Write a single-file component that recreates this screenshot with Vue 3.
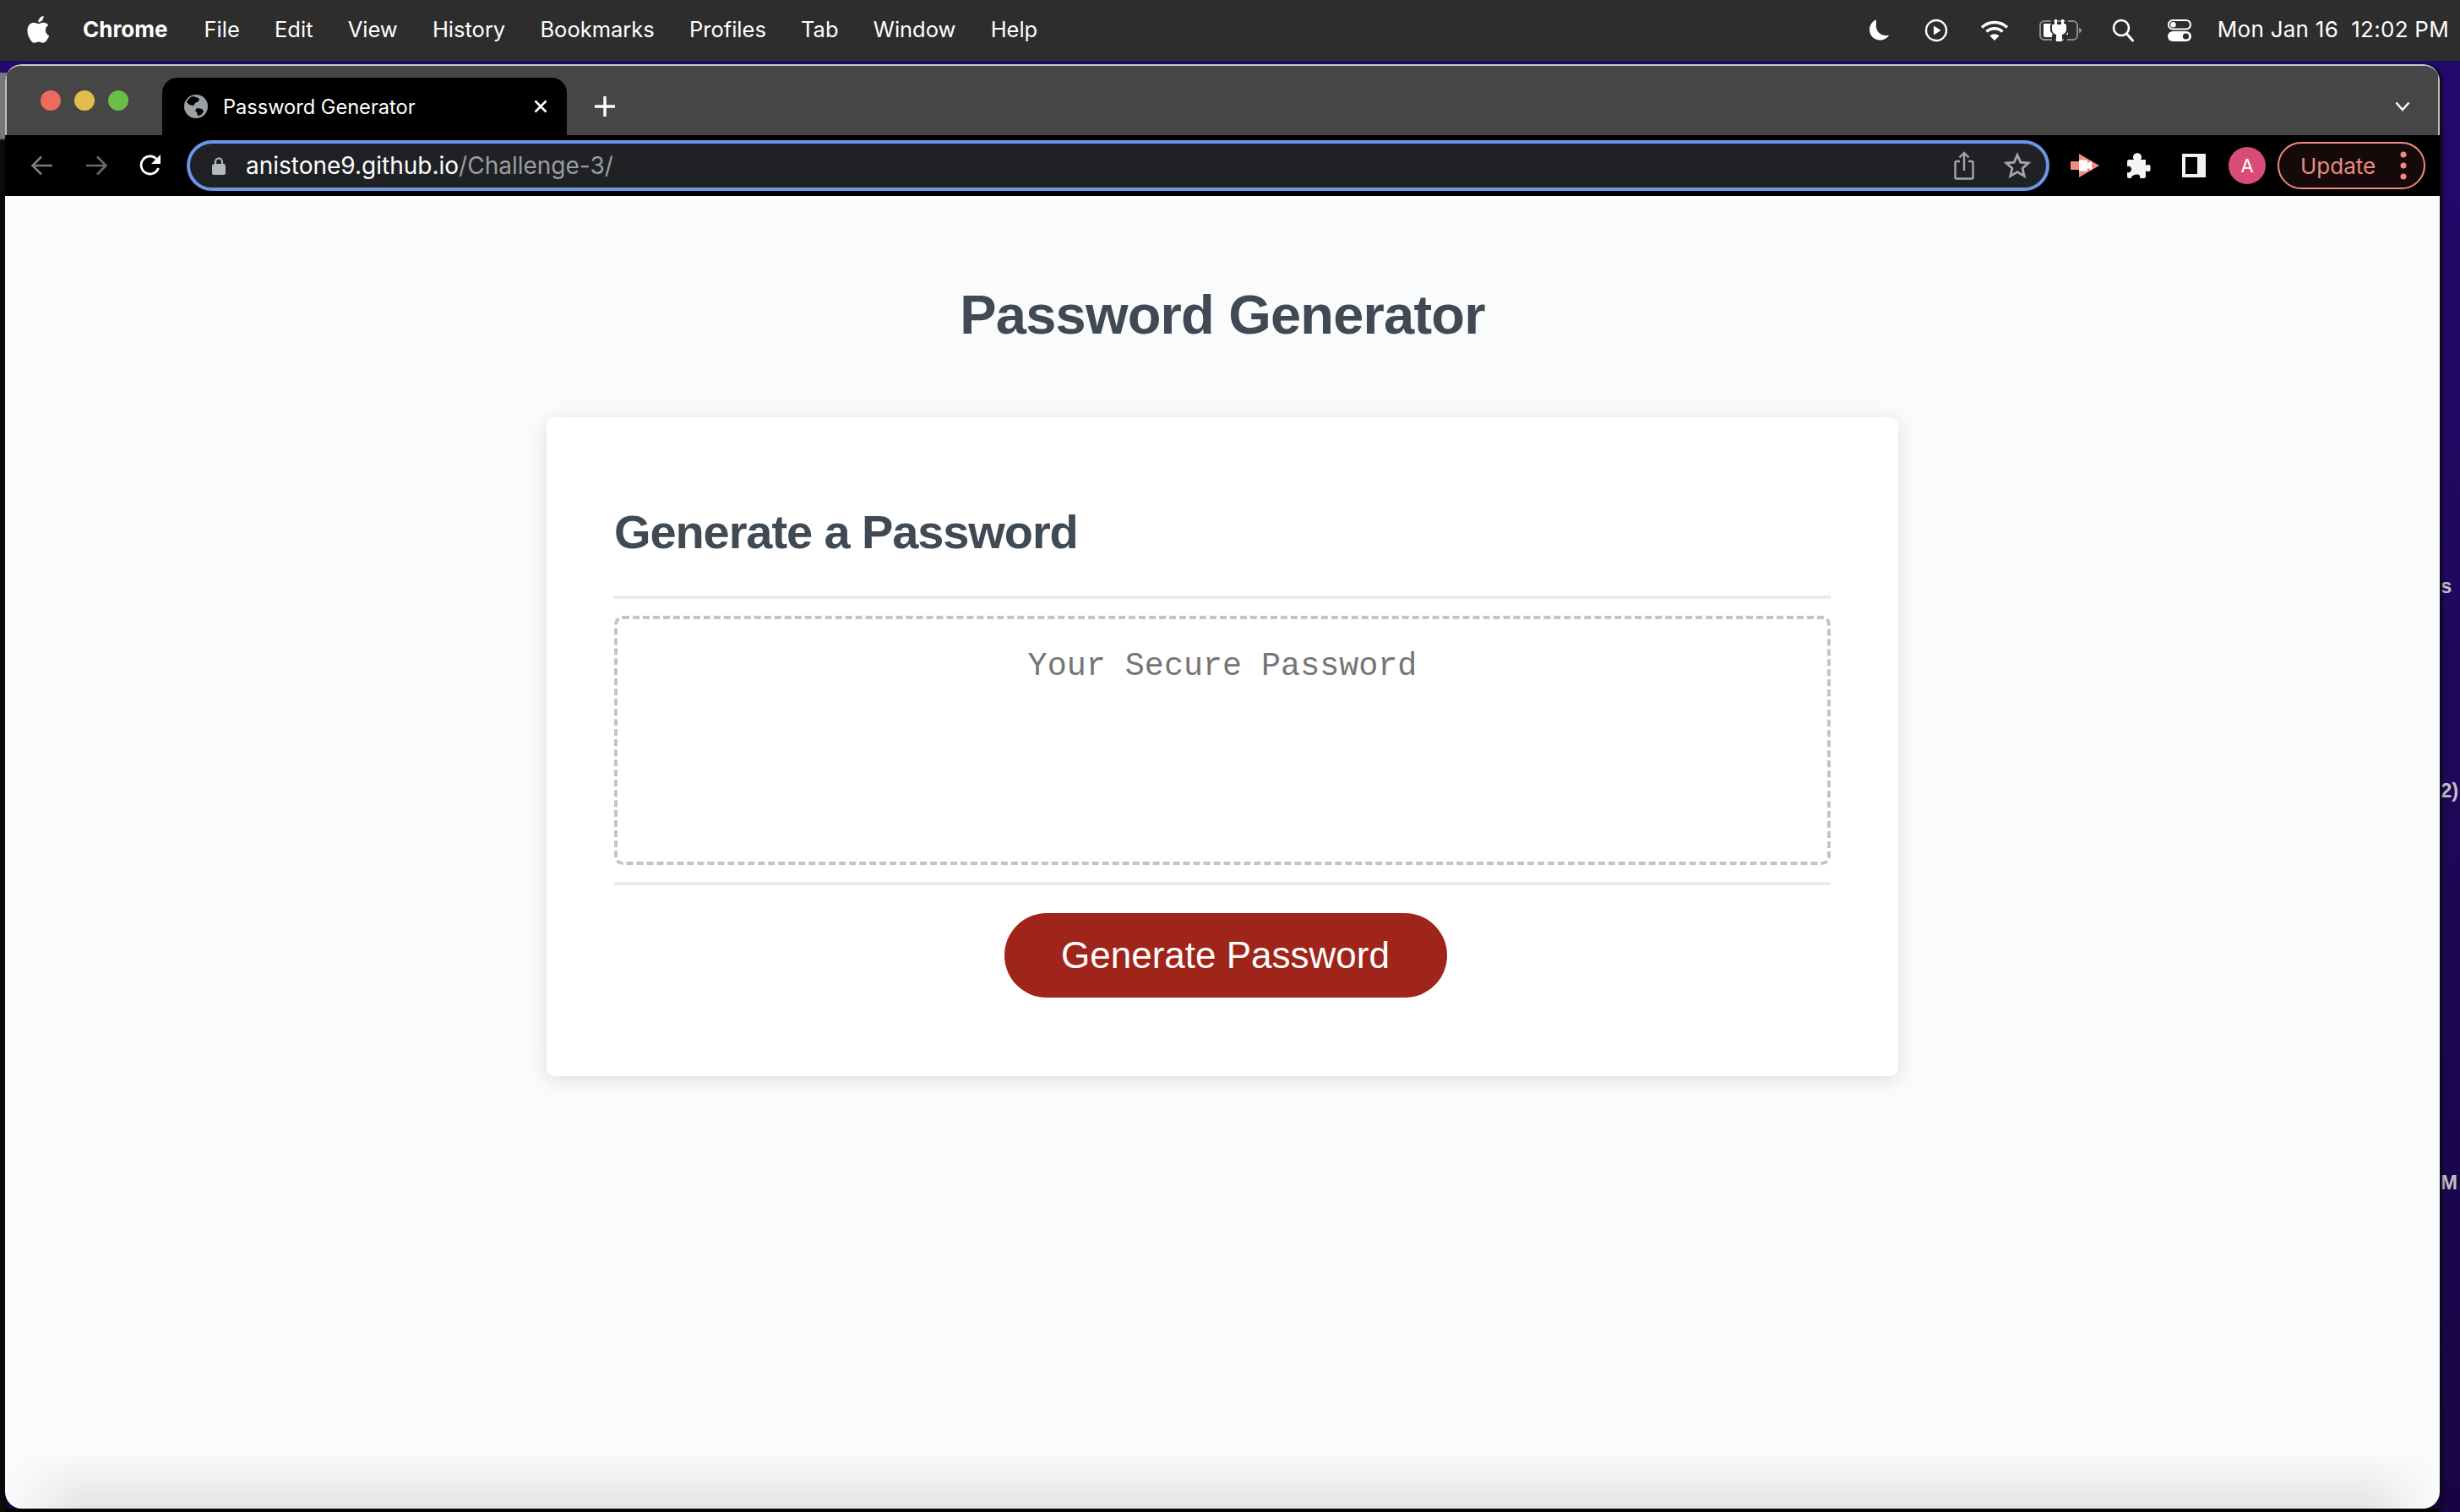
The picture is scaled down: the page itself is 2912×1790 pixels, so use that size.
<script setup>
const menus = ['File', 'Edit', 'View', 'History', 'Bookmarks', 'Profiles', 'Tab', 'Window', 'Help']
</script>

<template>
  <div class="desktop">
    <header class="menubar">
      <svg class="apple" viewBox="3.6 2 17 20.2"><path fill="#fff" d="M18.71 19.5c-.83 1.24-1.71 2.45-3.05 2.47-1.34.03-1.77-.79-3.29-.79-1.53 0-2 .77-3.27.82-1.31.05-2.3-1.32-3.14-2.53C4.25 17 2.94 12.45 4.7 9.39c.87-1.52 2.43-2.48 4.12-2.51 1.28-.02 2.5.87 3.29.87.78 0 2.26-1.07 3.81-.91.65.03 2.47.26 3.64 1.98-.09.06-2.17 1.28-2.15 3.81.03 3.02 2.65 4.03 2.68 4.04-.03.07-.42 1.44-1.38 2.83M13 3.5c.73-.83 1.94-1.46 2.94-1.5.13 1.17-.34 2.35-1.04 3.19-.69.85-1.83 1.51-2.95 1.42-.15-1.15.41-2.35 1.05-3.11z"/></svg>
      <span class="menu-app">Chrome</span>
      <nav class="menus"><span v-for="m in menus" :key="m">{{ m }}</span></nav>
      <div class="status">
        <svg class="st moon" viewBox="0 0 28 28"><path fill="#fff" d="M10.5 1.5C6 3.5 3 8 3 13c0 7 5.6 12.5 12.5 12.5 4.6 0 8.6-2.4 10.7-6-1.2.4-2.5.6-3.8.6-6.4 0-11.6-5.2-11.6-11.6 0-2.5.6-5-.3-7z"/></svg>
        <svg class="st play" viewBox="0 0 28 28"><circle cx="14" cy="14" r="12" fill="none" stroke="#fff" stroke-width="2.4"/><path fill="#fff" d="M11 8.5l8.5 5.5-8.5 5.5z"/></svg>
        <svg class="st wifi" viewBox="0 0 34 26"><path fill="none" stroke="#fff" stroke-width="3.6" d="M2 9.5c8.5-8 21.5-8 30 0M7.5 14.500c5.400-5 13.600-5 19 0"/><path fill="#fff" d="M17 25l-5.500-5.600c3.200-2.800 7.800-2.800 11 0z"/></svg>
        <svg class="st batt" viewBox="0 0 50 26"><rect x="1" y="2" width="44" height="22" rx="5" fill="none" stroke="#8c8c8c" stroke-width="2"/><path fill="#8c8c8c" d="M47 9.500l3 2v3l-3 2z"/><path fill="#fff" d="M5 5h12v16H7q-2 0-2-2zM28 5h6v12l-2 4h-4z"/><path fill="#2d2d2d" d="M14 0h3v6h-3zM31 0h3v6h-3zM15 18h4v8h-4zM29 18h4v8h-4z"/><path fill="#2d2d2d" d="M13 6h3v6l6 8h4l6-8V6h3v8l-7 8h-8l-7-8z"/><path fill="#fff" d="M18 0h3v6h5V0h3v6h3v6c0 3-2 5-5 6v8h-7v-8c-3-1-5-3-5-6V6h3z"/></svg>
        <svg class="st search" viewBox="0 0 26 28"><circle cx="11" cy="11" r="9" fill="none" stroke="#fff" stroke-width="2.6"/><path stroke="#fff" stroke-width="3" stroke-linecap="round" d="M17.500 18l7 8"/></svg>
        <svg class="st ctrl" viewBox="0 0 28 26"><rect x="1" y="1" width="26" height="10.500" rx="5.200" fill="none" stroke="#fff" stroke-width="2"/><circle cx="6.500" cy="6.200" r="3.200" fill="#fff"/><rect y="14" width="28" height="12" rx="6" fill="#fff"/><circle cx="21.500" cy="20" r="3.600" fill="#2d2d2d"/></svg>
        <span class="clock">Mon Jan 16&nbsp; 12:02 PM</span>
      </div>
    </header>

    <div class="behind"></div>
    <div class="label label-s">s</div>
    <div class="label label-two">2)</div>
    <div class="label label-m">M</div>

    <main class="window">
      <div class="tabstrip">
        <div class="lights"><i class="red"></i><i class="yellow"></i><i class="green"></i></div>
        <div class="tab">
          <svg class="globe" viewBox="0 0 28 28"><circle cx="14" cy="14" r="14" fill="#9aa0a6"/><path fill="#000" d="M10 2c3 1 6 1 8 3l-1 3-4 2-2 3-5-1-3-3c1-3 4-6 7-7zM15 16l6 1 2 3-3 4-4 1-1-4-2-2z"/></svg>
          <span class="tab-title">Password Generator</span>
          <svg class="tab-close" viewBox="0 0 18 18"><path stroke="#fff" stroke-width="2.600" d="M2.500 2.500l13 13M15.500 2.500l-13 13"/></svg>
        </div>
        <svg class="newtab" viewBox="0 0 26 26"><path stroke="#fff" stroke-width="3.400" d="M13 1v24M1 13h24"/></svg>
        <svg class="chev" viewBox="0 0 18 12"><path fill="none" stroke="#fff" stroke-width="2.400" d="M1.500 1.500L9 10l7.500-8.500"/></svg>
      </div>

      <div class="toolbar">
        <svg class="nav" viewBox="0 0 28 26"><path fill="none" stroke="#7b7b7b" stroke-width="2.600" d="M26 13H3M13 2.500L2.500 13 13 23.500"/></svg>
        <svg class="nav fwd" viewBox="0 0 28 26"><path fill="none" stroke="#6a6a6a" stroke-width="2.600" d="M2 13h23M15 2.500L25.500 13 15 23.500"/></svg>
        <svg class="nav reload" viewBox="0 0 28 28"><path fill="none" stroke="#fff" stroke-width="2.800" d="M23.500 17a10.500 10.500 0 1 1-2.500-11"/><path fill="#fff" d="M26 1v11H15z"/></svg>
        <div class="omnibox">
          <svg class="lock" viewBox="0 0 16 22"><path fill="none" stroke="#b4b7bb" stroke-width="2.200" d="M4 10V6.500a4 4 0 0 1 8 0V10"/><rect y="9" width="16" height="13" rx="2.500" fill="#b4b7bb"/></svg>
          <span class="url">anistone9.github.io<span class="url-path">/Challenge-3/</span></span>
          <svg class="share" viewBox="0 0 24 34"><path fill="none" stroke="#a4a6a9" stroke-width="2.400" d="M7 12H3q-1.500 0-1.500 1.500V31q0 1.500 1.500 1.500h18q1.500 0 1.500-1.500V13.500q0-1.500-1.500-1.500h-4M12 23V2M6.500 7.500L12 2l5.500 5.500"/></svg>
          <svg class="star" viewBox="0 0 32 32"><path fill="none" stroke="#a4a6a9" stroke-width="2.800" d="M16 3.500l3.800 8.600 9.300.9-7 6.200 2.100 9.200-8.200-4.800-8.200 4.800 2.100-9.200-7-6.200 9.300-.9z"/></svg>
        </div>
        <svg class="ext" viewBox="0 0 34 28"><path fill="#f28b82" d="M0 9h10V0l24 14L10 28v-9H0z"/><path fill="#fff" d="M10 7.500h10v4l5-3v11l-5-3v4H10z"/></svg>
        <svg class="puzzle" viewBox="0 0 30 32"><path fill="#f1f3f4" d="M4 9h6c-1.500-2-1.500-4 0-6 2-2.500 6-2.500 8 0 1.500 2 1.500 4 0 6h6v7c2-1.500 4-1.500 5.500 0v6c-1.500 1.500-3.500 1.500-5.500 0v7q0 2-2 2h-5c1-2.500-.5-4.500-3-4.500S6 28 7 31H4q-2 0-2-2v-5c2.500 1 5-.5 5-3.500S4.500 16 2 17v-6q0-2 2-2z"/></svg>
        <div class="sidepanel"></div>
        <div class="avatar">A</div>
        <div class="update">
          <span>Update</span>
          <svg class="dots" viewBox="0 0 8 34"><circle cx="4" cy="4" r="3.500"/><circle cx="4" cy="17" r="3.500"/><circle cx="4" cy="30" r="3.500"/></svg>
        </div>
      </div>

      <section class="page">
        <h1 class="title">Password Generator</h1>
        <div class="card">
          <h2 class="card-title">Generate a Password</h2>
          <div class="card-body">
            <div class="password">Your Secure Password</div>
          </div>
          <div class="card-footer">
            <button class="generate" type="button">Generate Password</button>
          </div>
        </div>
        <div class="dock-shadow"></div>
      </section>
    </main>
  </div>
</template>

<style>
html, body { margin: 0; background: #1a0a4c; }
</style>

<style scoped>
.desktop {
  position: relative;
  width: 2912px;
  height: 1790px;
  overflow: hidden;
  background: linear-gradient(180deg, #24096e 0%, #170543 100%);
  font-family: Inter, "Liberation Sans", sans-serif;
}
.menubar {
  height: 72px;
  box-sizing: border-box;
  padding: 0 0 3px 32px;
  background: #2d2d2d;
  display: flex;
  align-items: center;
  color: #fff;
  font-size: 25.5px;
}
.apple { width: 27px; height: 32px; margin-top: 1px; }
.menu-app { font-weight: 700; font-size: 26px; margin-left: 39px; }
.menus { display: flex; gap: 41.2px; margin-left: 43px; }
.status { margin-left: auto; display: flex; align-items: center; padding-right: 13px; }
.st { display: block; flex: none; margin-top: 3px; }
.moon { width: 28px; height: 28px; margin-right: 40px; }
.play { width: 28px; height: 28px; margin-right: 38px; }
.wifi { width: 34px; height: 26px; margin-right: 36px; }
.batt { width: 50px; height: 26px; margin-right: 36px; }
.search { width: 26px; height: 28px; margin-right: 40px; }
.ctrl { width: 28px; height: 26px; margin-right: 31px; }
.clock { white-space: nowrap; font-size: 26px; letter-spacing: 0.27px; }

.behind {
  position: absolute;
  left: 0;
  top: 86px;
  bottom: 0;
  width: 8px;
  background: linear-gradient(180deg, #777 0, #777 78px, #0a0a0c 80px);
}
.label { position: absolute; left: 2889px; color: #c0c0c4; font: 700 24px/24px "Liberation Sans", sans-serif; }
.label-s { top: 682px; }
.label-two { top: 924px; }
.label-m { top: 1388px; }

.window {
  position: relative;
  margin: 4px 24px 0 6px;
  height: 1708px;
  border-radius: 20px 20px 0 0;
  overflow: hidden;
  border-top: 2px solid #c9c9c9;
  display: flex;
  flex-direction: column;
  box-shadow: 3px 0 3px #0c0a14, 0 6px 0 #000;
}
.tabstrip {
  height: 82px;
  flex: none;
  background: #464646;
  display: flex;
  align-items: flex-end;
  box-shadow: inset 2px 0 0 #bdbdbd, inset -2px 0 0 #bdbdbd;
}
.lights { display: flex; gap: 16px; width: 186px; padding: 0 0 29px 42px; box-sizing: border-box; }
.lights i { width: 24px; height: 24px; border-radius: 50%; display: block; }
.red { background: #ee6a5e; }
.yellow { background: #e1bd4b; }
.green { background: #6abf47; }
.tab {
  width: 479px;
  height: 68px;
  background: #000;
  border-radius: 18px 18px 0 0;
  display: flex;
  align-items: center;
  color: #fff;
  font-size: 23.6px;
  box-sizing: border-box;
  padding: 0 22px 0 26px;
}
.globe { width: 28px; height: 28px; flex: none; }
.tab-title { margin-left: 18px; white-space: nowrap; }
.tab-close { width: 18px; height: 18px; margin-left: auto; }
.newtab { width: 26px; height: 26px; margin: 0 0 21px 32px; }
.chev { width: 18px; height: 12px; margin: 0 35px 28px auto; }

.toolbar {
  height: 72px;
  flex: none;
  background: #000;
  display: flex;
  align-items: center;
}
.nav { width: 28px; height: 26px; margin-left: 30px; flex: none; }
.nav.fwd { margin-left: 36px; }
.nav.reload { height: 28px; margin-left: 36px; }
.omnibox {
  width: 2205px;
  height: 60px;
  margin-left: 29px;
  box-sizing: border-box;
  border: 4px solid #6b96e6;
  border-radius: 30px;
  background: #202124;
  display: flex;
  align-items: center;
  padding-left: 26px;
  color: #fff;
  font-size: 28px;
  flex: none;
}
.lock { width: 16px; height: 22px; flex: none; }
.url { margin-left: 24px; white-space: nowrap; }
.url-path { color: #9a9da1; }
.share { width: 24px; height: 34px; margin-left: auto; }
.star { width: 32px; height: 32px; margin: 0 18px 0 35px; }
.ext { width: 34px; height: 28px; margin-left: 25px; flex: none; }
.puzzle { width: 30px; height: 32px; margin-left: 31px; flex: none; }
.sidepanel { width: 28px; height: 28px; box-sizing: border-box; border: solid #f1f3f4; border-width: 4px 10px 4px 4px; margin-left: 37px; flex: none; }
.avatar {
  width: 44px;
  height: 44px;
  border-radius: 50%;
  background: #d94c78;
  color: #fff;
  font-size: 22px;
  display: flex;
  align-items: center;
  justify-content: center;
  margin-left: 27px;
  flex: none;
}
.update {
  width: 175px;
  height: 56px;
  box-sizing: border-box;
  border: 2px solid #ee8b80;
  border-radius: 28px;
  background: #150a09;
  color: #ee8b80;
  font-size: 26px;
  display: flex;
  align-items: center;
  padding: 0 20px 0 25px;
  margin-left: 14px;
  flex: none;
}
.dots { width: 8px; height: 34px; margin-left: auto; fill: #ee8b80; }

.page {
  flex: 1;
  min-height: 0;
  position: relative;
  background: #f9fbfd;
  display: flex;
  flex-direction: column;
  align-items: center;
  border-radius: 0 0 20px 20px;
  font-family: "Liberation Sans", Arial, sans-serif;
}
.title {
  margin: 101px 0 0;
  color: #3f4a54;
  font-size: 65px;
  letter-spacing: -0.8px;
  line-height: 80px;
  font-weight: 700;
}
.card {
  width: 1600px;
  height: 780px;
  margin-top: 81px;
  background: #fff;
  border-radius: 10px;
  box-shadow: 0 4px 24px rgba(0, 0, 20, 0.12);
  box-sizing: border-box;
  padding: 103px 80px 0;
}
.card-title {
  margin: 0;
  color: #3f4a54;
  font-size: 56px;
  letter-spacing: -1.1px;
  line-height: 66px;
  font-weight: 700;
}
.card-body {
  margin-top: 42px;
  border-top: 4px solid #e8eaed;
  border-bottom: 4px solid #e8eaed;
  padding: 20px 0;
}
.password {
  height: 295px;
  box-sizing: border-box;
  border: 4px dashed #c1c5cb;
  border-radius: 10px;
  padding: 34px 0;
  text-align: center;
  color: #757575;
  font: 38.4px/44px "Liberation Mono", monospace;
}
.card-footer { display: flex; justify-content: center; padding-left: 7px; margin-top: 33px; }
.generate {
  width: 524px;
  height: 100px;
  border: 0;
  border-radius: 50px;
  background: #9f2419;
  color: #fff;
  font: 44px "Liberation Sans", Arial, sans-serif;
}
.dock-shadow {
  position: absolute;
  left: 0;
  right: 0;
  bottom: 0;
  height: 70px;
  background: linear-gradient(180deg, rgba(0, 0, 0, 0), rgba(0, 0, 0, 0.09));
  -webkit-mask-image: linear-gradient(90deg, transparent 0, #000 90px, #000 calc(100% - 90px), transparent 100%);
  mask-image: linear-gradient(90deg, transparent 0, #000 90px, #000 calc(100% - 90px), transparent 100%);
}
</style>
